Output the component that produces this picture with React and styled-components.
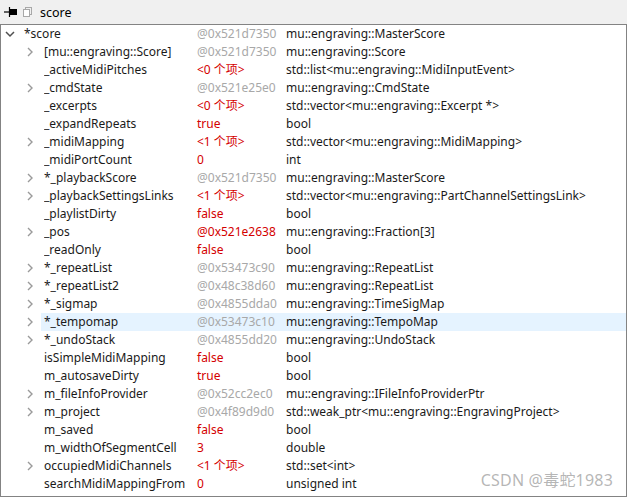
import React from "react";
import styled, { createGlobalStyle } from "styled-components";

const Global = createGlobalStyle`
  html, body { margin: 0; padding: 0; background: #ffffff; }
  body { width: 627px; height: 497px; overflow: hidden; font-family: "Noto Sans", "Noto Sans CJK SC", sans-serif; }
`;

const Page = styled.div`
  position: relative;
  width: 627px;
  height: 497px;
  display: flex;
  flex-direction: column;
  background: #f0f0f0;
`;

const Header = styled.div`
  height: 24px;
  display: flex;
  align-items: center;
  padding-left: 4px;
  gap: 4px;
  font-size: 12px;
  color: #000;
`;

const Title = styled.span`
  margin-left: 2px;
  font-size: 12.5px;
`;

const Frame = styled.div`
  flex: 1;
  border: 1px solid #838383;
  background: #ffffff;
  display: flex;
  flex-direction: column;
  overflow: hidden;
`;

const Row = styled.div`
  height: 18px;
  display: flex;
  align-items: stretch;
  font-size: 12px;
  line-height: 18px;
  white-space: nowrap;
`;

const Gutter = styled.div`
  width: ${(p) => 20 + p.$level * 20}px;
  flex: 0 0 auto;
  display: flex;
  justify-content: flex-end;
  align-items: center;
  padding-right: 3px;
  box-sizing: border-box;
`;

const Chevron = styled.div`
  width: 16px;
  height: 18px;
  display: flex;
  align-items: center;
  justify-content: center;
`;

const Content = styled.div`
  flex: 1;
  display: grid;
  grid-template-columns: ${(p) => 173 - p.$level * 20}px 89px 1fr;
  padding-left: 3px;
  background: ${(p) => (p.$selected ? "#e5f3ff" : "transparent")};
`;

const Name = styled.span`
  color: #1a1a1a;
  overflow: hidden;
`;

const Value = styled.span`
  color: ${(p) => (p.$kind === "red" ? "#d40000" : "#a8a8a8")};
`;

const Type = styled.span`
  color: #1a1a1a;
`;

const Watermark = styled.div`
  position: absolute;
  right: 14px;
  bottom: 6px;
  font-size: 16px;
  color: rgba(150, 150, 150, 0.7);
  font-family: "Noto Sans", "Noto Sans CJK SC", sans-serif;
  letter-spacing: 0.2px;
`;

const PinIcon = () => (
  <svg width="14" height="12" viewBox="0 0 14 12">
    <line x1="0" y1="6" x2="5" y2="6" stroke="#000" strokeWidth="1.2" />
    <line x1="5.5" y1="1" x2="5.5" y2="11" stroke="#000" strokeWidth="1.2" />
    <rect x="6" y="3" width="7" height="6" fill="#000" />
  </svg>
);

const CopyIcon = () => (
  <svg width="12" height="12" viewBox="0 0 12 12">
    <rect x="3.5" y="1.5" width="6" height="7" fill="none" stroke="#a8a8a8" strokeWidth="1" />
    <rect x="1.5" y="3.5" width="6" height="7" fill="#fff" stroke="#a8a8a8" strokeWidth="1" />
  </svg>
);

const ChevronRight = () => (
  <svg width="8" height="10" viewBox="0 0 8 10">
    <polyline points="2,1 6,5 2,9" fill="none" stroke="#9a9a9a" strokeWidth="1.4" />
  </svg>
);

const ChevronDown = () => (
  <svg width="10" height="8" viewBox="0 0 10 8">
    <polyline points="1,2 5,6 9,2" fill="none" stroke="#505050" strokeWidth="1.5" />
  </svg>
);

const rows = [
  [0, "open", "*score", "gray", "@0x521d7350", "mu::engraving::MasterScore"],
  [1, "closed", "[mu::engraving::Score]", "gray", "@0x521d7350", "mu::engraving::Score"],
  [1, "", "_activeMidiPitches", "red", "<0 个项>", "std::list<mu::engraving::MidiInputEvent>"],
  [1, "closed", "_cmdState", "gray", "@0x521e25e0", "mu::engraving::CmdState"],
  [1, "", "_excerpts", "red", "<0 个项>", "std::vector<mu::engraving::Excerpt *>"],
  [1, "", "_expandRepeats", "red", "true", "bool"],
  [1, "closed", "_midiMapping", "red", "<1 个项>", "std::vector<mu::engraving::MidiMapping>"],
  [1, "", "_midiPortCount", "red", "0", "int"],
  [1, "closed", "*_playbackScore", "gray", "@0x521d7350", "mu::engraving::MasterScore"],
  [1, "closed", "_playbackSettingsLinks", "red", "<1 个项>", "std::vector<mu::engraving::PartChannelSettingsLink>"],
  [1, "", "_playlistDirty", "red", "false", "bool"],
  [1, "closed", "_pos", "red", "@0x521e2638", "mu::engraving::Fraction[3]"],
  [1, "", "_readOnly", "red", "false", "bool"],
  [1, "closed", "*_repeatList", "gray", "@0x53473c90", "mu::engraving::RepeatList"],
  [1, "closed", "*_repeatList2", "gray", "@0x48c38d60", "mu::engraving::RepeatList"],
  [1, "closed", "*_sigmap", "gray", "@0x4855dda0", "mu::engraving::TimeSigMap"],
  [1, "closed", "*_tempomap", "gray", "@0x53473c10", "mu::engraving::TempoMap", true],
  [1, "closed", "*_undoStack", "gray", "@0x4855dd20", "mu::engraving::UndoStack"],
  [1, "", "isSimpleMidiMapping", "red", "false", "bool"],
  [1, "", "m_autosaveDirty", "red", "true", "bool"],
  [1, "closed", "m_fileInfoProvider", "gray", "@0x52cc2ec0", "mu::engraving::IFileInfoProviderPtr"],
  [1, "closed", "m_project", "gray", "@0x4f89d9d0", "std::weak_ptr<mu::engraving::EngravingProject>"],
  [1, "", "m_saved", "red", "false", "bool"],
  [1, "", "m_widthOfSegmentCell", "red", "3", "double"],
  [1, "closed", "occupiedMidiChannels", "red", "<1 个项>", "std::set<int>"],
  [1, "", "searchMidiMappingFrom", "red", "0", "unsigned int"],
];

export default function App() {
  return (
    <>
      <Global />
      <Page>
        <Header>
          <PinIcon />
          <CopyIcon />
          <Title>score</Title>
        </Header>
        <Frame>
          {rows.map(([level, exp, name, kind, value, type, selected], i) => (
            <Row key={i}>
              <Gutter $level={level}>
                <Chevron>
                  {exp === "open" ? <ChevronDown /> : exp === "closed" ? <ChevronRight /> : null}
                </Chevron>
              </Gutter>
              <Content $level={level} $selected={!!selected}>
                <Name>{name}</Name>
                <Value $kind={kind}>{value}</Value>
                <Type>{type}</Type>
              </Content>
            </Row>
          ))}
        </Frame>
        <Watermark>CSDN @毒蛇1983</Watermark>
      </Page>
    </>
  );
}
